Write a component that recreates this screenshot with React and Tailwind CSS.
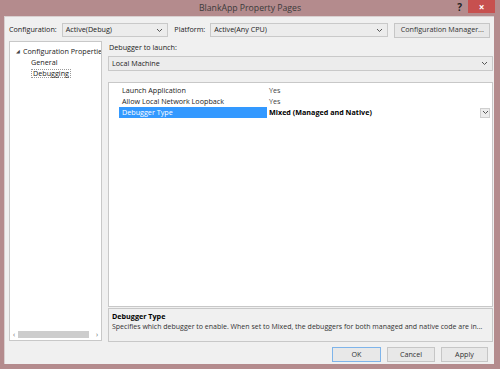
import React from "react";

const font = { fontFamily: '"Open Sans", "Noto Sans", sans-serif' };

function Chevron({ className = "" }) {
  return (
    <svg width="7" height="5" viewBox="0 0 7 5" className={className}>
      <path d="M1 1 L3.5 3.5 L6 1" fill="none" stroke="#555" strokeWidth="1" />
    </svg>
  );
}

function Combo({ className = "", children }) {
  return (
    <div
      className={`flex items-center justify-between border border-[#c9c9c9] bg-[#ececec] pl-[3px] pr-[4px] text-[#222] ${className}`}
    >
      <span>{children}</span>
      <Chevron />
    </div>
  );
}

function Btn({ className = "", children }) {
  return (
    <div
      className={`flex items-center justify-center border border-[#c6c6c6] bg-[#e8e8e8] text-[#333] ${className}`}
    >
      {children}
    </div>
  );
}

export default function App() {
  const rows = [
    { name: "Launch Application", value: "Yes" },
    { name: "Allow Local Network Loopback", value: "Yes" },
    { name: "Debugger Type", value: "Mixed (Managed and Native)", selected: true },
  ];

  return (
    <div
      className="w-[500px] h-[369px] bg-[#b48b8d] flex flex-col text-[7.2px] leading-none"
      style={font}
    >
      {/* title bar */}
      <div className="h-[17px] flex items-start relative">
        <div className="flex-1 text-center text-[#3a3a3a] text-[8.7px] pt-[4px]">
          BlankApp Property Pages
        </div>
        <div className="absolute right-[38px] top-[2px] text-[#222] text-[10px] font-bold">?</div>
        <div className="absolute right-[5px] top-0 w-[27px] h-[13px] bg-[#c7504f] flex items-center justify-center text-white text-[10px] font-bold">
          ×
        </div>
      </div>

      {/* client area */}
      <div className="flex-1 ml-[4px] mr-[6px] mb-[5px] bg-[#f0f0f0] border-t border-l border-[#d9d0d0] flex flex-col px-[4px] pt-[6px]">
        {/* top row */}
        <div className="flex items-center h-[14px] text-[#222]">
          <span className="w-[53px]">Configuration:</span>
          <Combo className="w-[107px] h-[14px]">Active(Debug)</Combo>
          <span className="ml-[6px] w-[36px]">Platform:</span>
          <Combo className="w-[179px] h-[14px]">Active(Any CPU)</Combo>
          <Btn className="ml-[6px] w-[96px] h-[15px]">Configuration Manager...</Btn>
        </div>

        <div className="flex flex-1 mt-[4px] gap-[6px]">
          {/* tree */}
          <div className="w-[93px] h-[300px] border border-[#c8c8c8] bg-white flex flex-col text-[#222]">
            <div className="flex-1 pt-[4px]">
              <div className="flex items-center h-[11px] pl-[6px] whitespace-nowrap overflow-hidden">
                <span className="text-[5px] text-[#444] mr-[3px]">◢</span>
                <span>Configuration Properties</span>
              </div>
              <div className="h-[11px] pl-[21px] flex items-center">General</div>
              <div className="h-[11px] pl-[21px] flex items-center">
                <span className="border border-dotted border-[#999] px-[1px]">Debugging</span>
              </div>
            </div>
            <div className="h-[10px] flex items-center mb-[1px] px-[3px] gap-[3px] text-[#666]">
              <span className="text-[7px]">‹</span>
              <div className="flex-1 h-[7px] bg-[#cdcdcd]" />
              <span className="text-[7px] ml-[4px]">›</span>
            </div>
          </div>

          {/* right side */}
          <div className="flex-1 flex flex-col text-[#222]">
            <div className="h-[11px] flex items-center pl-[1px] mt-[1px]">Debugger to launch:</div>
            <Combo className="w-[385px] h-[15px] mt-[3px]">Local Machine</Combo>

            <div className="mt-[11px] w-[385px] h-[225px] border border-[#c8c8c8] bg-white pt-[2px]">
              {rows.map((r) => (
                <div key={r.name} className="flex h-[11px] items-center">
                  <div
                    className={`ml-[10px] w-[148px] h-full flex items-center pl-[3px] ${
                      r.selected ? "bg-[#3399ff] text-white" : ""
                    }`}
                  >
                    {r.name}
                  </div>
                  <div className={`pl-[2px] flex-1 ${r.selected ? "font-bold text-black" : "text-[#444]"}`}>
                    {r.value}
                  </div>
                  {r.selected && (
                    <div className="w-[10px] h-[10px] mr-[2px] border border-[#cfcfcf] bg-[#ececec] flex items-center justify-center">
                      <Chevron />
                    </div>
                  )}
                </div>
              ))}
            </div>

            <div className="mt-[1px] w-[385px] h-[34px] border border-[#c8c8c8] bg-[#f0f0f0] px-[3px] pt-[4px]">
              <div className="font-bold text-black">Debugger Type</div>
              <div className="mt-[3px] text-[#333] text-[7px] whitespace-nowrap">
                Specifies which debugger to enable. When set to Mixed, the debuggers for both managed and native code are in...
              </div>
            </div>
          </div>
        </div>

        {/* buttons */}
        <div className="flex justify-end gap-[6px] mt-[5px] mb-[2px] pr-[2px]">
          <Btn className="w-[49px] h-[15px] !border-[#7eb4ea]">OK</Btn>
          <Btn className="w-[48px] h-[15px]">Cancel</Btn>
          <Btn className="w-[47px] h-[15px]">Apply</Btn>
        </div>
      </div>
    </div>
  );
}
